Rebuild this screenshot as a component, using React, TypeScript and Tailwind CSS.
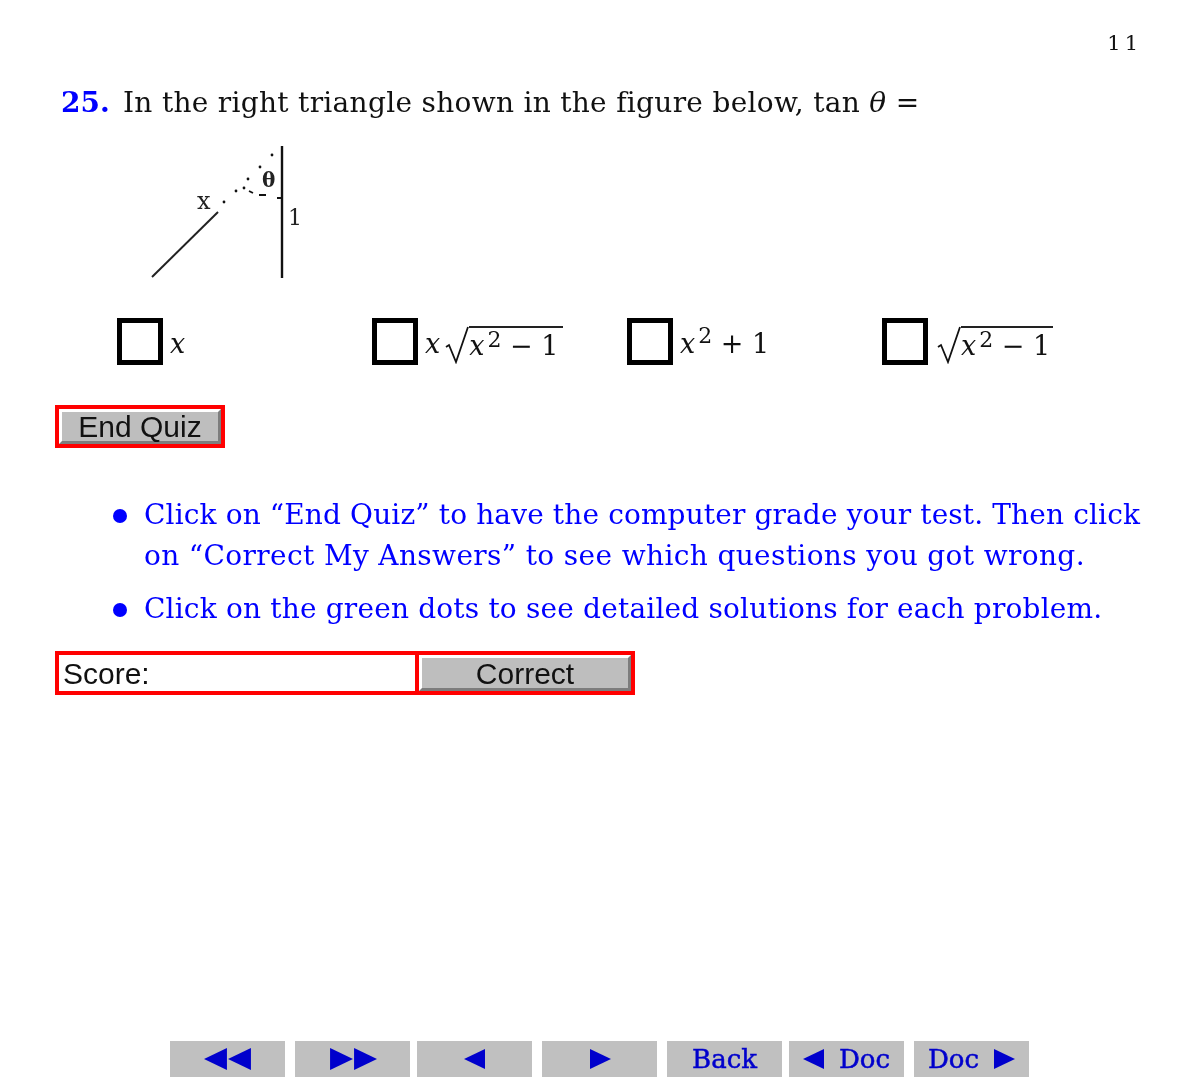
import React from "react";

const Serif = "font-['DejaVu_Serif','Liberation_Serif',serif]";

function Tri({ dir, size = 22 }: { dir: "l" | "r"; size?: number }) {
  return (
    <svg width={size} height={size} viewBox="0 0 22 22" className="shrink-0">
      {dir === "l" ? (
        <path d="M0 11 L21 1 V21 Z" fill="#0000cc" />
      ) : (
        <path d="M1 1 L22 11 L1 21 Z" fill="#0000cc" />
      )}
    </svg>
  );
}

function Radical({ children, outer, inner }: { children: React.ReactNode; outer: string; inner: string }) {
  return (
    <span className={`inline-flex items-start self-start mt-[8px] ${outer}`}>
      <svg width="24" height="38" viewBox="0 0 24 38" className="shrink-0">
        <path d="M1 21 L4 19 L11 36 L23 1" fill="none" stroke="#111" strokeWidth="1.8" />
      </svg>
      <span className={`border-t-2 border-[#222] leading-[36px] h-[38px] inline-block whitespace-pre ${inner}`}>{children}</span>
    </span>
  );
}

function X() {
  return <i>x</i>;
}

function Sq() {
  return <span className="text-[22px] relative -top-[8px] ml-[3px]">2</span>;
}

function Choice({ children }: { children: React.ReactNode }) {
  return (
    <div className="flex items-start gap-[7px]">
      <div className="w-[46px] h-[47px] border-[5px] border-black bg-white shrink-0" />
      <div className="text-[27px] leading-[52px] text-[#111] flex items-start whitespace-pre h-[47px]">{children}</div>
    </div>
  );
}

function Bevel({ children, className }: { children: React.ReactNode; className: string }) {
  return (
    <div className={`bg-[#bebebe] border-[3px] border-t-white border-l-white border-r-[#7d7d7d] border-b-[#7d7d7d] flex items-center justify-center text-[30px] text-[#111] font-['Liberation_Sans',Arial,sans-serif] ${className}`}>
      {children}
    </div>
  );
}

function Nav({ children, className }: { children: React.ReactNode; className: string }) {
  return (
    <div className={`w-[115px] h-[36px] bg-[#c0c0c0] flex items-center justify-center gap-[14px] text-[#0000cc] text-[26px] [-webkit-text-stroke:0.5px_#0000cc] ${className}`}>
      {children}
    </div>
  );
}

export default function App() {
  return (
    <div className={`w-[1200px] h-[1080px] bg-white flex flex-col overflow-hidden blur-[0.6px] ${Serif}`}>
      <div className="mt-[23px] h-[41px] leading-[41px] text-right pr-[58px] text-[21px] text-[#111] tracking-[4px]">11</div>

      <div className="mt-[18px] h-[41px] leading-[41px] pl-[61px] flex text-[28px] text-[#111] whitespace-pre">
        <span className="text-[#0000ff] font-bold w-[62px]">25.</span>
        <span className="tracking-[0.3px]">In the right triangle shown in the figure below, tan <i>θ</i> =</span>
      </div>

      <svg width="190" height="150" viewBox="130 140 190 150" className="ml-[130px] mt-[17px] shrink-0">
        <path d="M282 146 V278" stroke="#111" strokeWidth="2.4" />
        <path d="M152 277 L218 212" stroke="#222" strokeWidth="2" />
        <path d="M277 198 H282 M259 195 H266 M249 191 L253 193" stroke="#111" strokeWidth="1.8" />
        <g fill="#111">
          <circle cx="272" cy="155" r="1.4" />
          <circle cx="260" cy="167" r="1.4" />
          <circle cx="248" cy="179" r="1.4" />
          <circle cx="244" cy="188" r="1.4" />
          <circle cx="236" cy="191" r="1.4" />
          <circle cx="224" cy="202" r="1.4" />
        </g>
        <text x="197" y="209" fontSize="24" fill="#222">x</text>
        <text x="262" y="187" fontSize="20" fontWeight="bold" fill="#222">θ</text>
        <text x="288" y="225" fontSize="22" fill="#222">1</text>
      </svg>

      <div className="ml-[117px] mt-[28px] w-[1020px] grid grid-cols-4">
        <Choice><X /></Choice>
        <Choice>
          <X />
          <Radical outer="ml-[5px]" inner="pr-[5px]"><X /><Sq /> − 1</Radical>
        </Choice>
        <Choice><X /><Sq /> + 1</Choice>
        <Choice>
          <Radical outer="ml-[2px]" inner="pr-[3px]"><X /><Sq /> − 1</Radical>
        </Choice>
      </div>

      <div className="ml-[55px] mt-[40px] w-[170px] h-[43px] border-[4px] border-[#ff0000]">
        <Bevel className="w-full h-full">End Quiz</Bevel>
      </div>

      <ul className="mt-[46px] ml-[113px] text-[#0000ff] text-[28px] leading-[41px] whitespace-pre">
        <li className="flex">
          <span className="w-[31px] shrink-0 flex items-center h-[41px]"><span className="w-[14px] h-[14px] rounded-full bg-[#0000ff] mt-[3px]" /></span>
          <span className="flex flex-col">
            <span className="tracking-[0.13px]">Click on “End Quiz” to have the computer grade your test. Then click</span>
            <span className="tracking-[0.36px]">on “Correct My Answers” to see which questions you got wrong.</span>
          </span>
        </li>
        <li className="flex mt-[12px]">
          <span className="w-[31px] shrink-0 flex items-center h-[41px]"><span className="w-[14px] h-[14px] rounded-full bg-[#0000ff] mt-[3px]" /></span>
          <span className="tracking-[0.18px]">Click on the green dots to see detailed solutions for each problem.</span>
        </li>
      </ul>

      <div className="ml-[55px] mt-[22px] w-[580px] h-[44px] border-[4px] border-[#ff0000] flex">
        <div className="w-[356px] bg-white flex items-center pl-[4px] text-[30px] text-[#111] font-['Liberation_Sans',Arial,sans-serif]">Score:</div>
        <div className="w-[4px] bg-[#ff0000]" />
        <Bevel className="flex-1">Correct</Bevel>
      </div>

      <div className="mt-auto mb-[3px] ml-[170px] flex">
        <Nav className=""><span className="flex"><Tri dir="l" size={24} /><Tri dir="l" size={24} /></span></Nav>
        <Nav className="ml-[10px]"><span className="flex"><Tri dir="r" size={24} /><Tri dir="r" size={24} /></span></Nav>
        <Nav className="ml-[7px]"><Tri dir="l" /></Nav>
        <Nav className="ml-[10px]"><Tri dir="r" /></Nav>
        <Nav className="ml-[10px]">Back</Nav>
        <Nav className="ml-[7px]"><Tri dir="l" />Doc</Nav>
        <Nav className="ml-[10px]">Doc<Tri dir="r" /></Nav>
      </div>
    </div>
  );
}
